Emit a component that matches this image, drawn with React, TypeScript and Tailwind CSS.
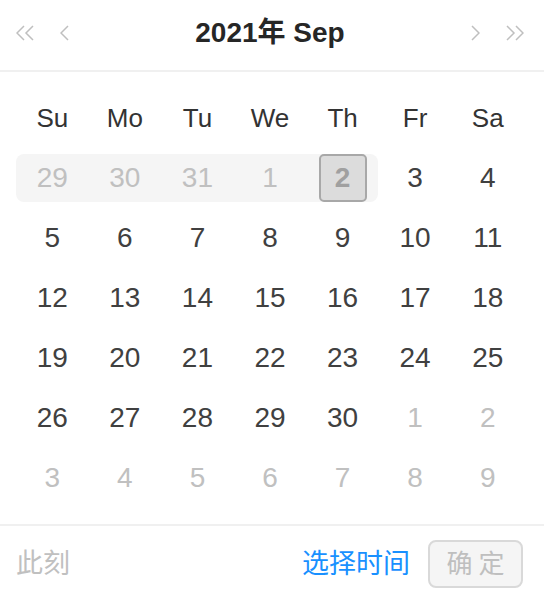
import React from "react";

const font = { fontFamily: '"Liberation Sans", "Noto Sans CJK SC", sans-serif' };

function Chevron({ dir, double }: { dir: "l" | "r"; double?: boolean }) {
  const single = dir === "l" ? "M8 1 L1 8 L8 15" : "M1 1 L8 8 L1 15";
  const second = dir === "l" ? "M17 1 L10 8 L17 15" : "M10 1 L17 8 L10 15";
  return (
    <svg width={double ? 18 : 9} height={16} viewBox={double ? "0 0 18 16" : "0 0 9 16"} fill="none" stroke="#bfbfbf" strokeWidth={1.5}>
      <path d={single} />
      {double && <path d={second} />}
    </svg>
  );
}

export default function App() {
  const weeks = ["Su", "Mo", "Tu", "We", "Th", "Fr", "Sa"];
  const days: { d: number; cur: boolean }[] = [];
  [29, 30, 31].forEach((d) => days.push({ d, cur: false }));
  for (let i = 1; i <= 30; i++) days.push({ d: i, cur: i !== 1 });
  for (let i = 1; i <= 9; i++) days.push({ d: i, cur: false });
  const rows: { d: number; cur: boolean }[][] = [];
  for (let i = 0; i < 6; i++) rows.push(days.slice(i * 7, i * 7 + 7));

  return (
    <div className="w-[544px] h-[602px] bg-white overflow-hidden" style={font}>
      <div className="h-[72px] flex items-center px-4 pb-[4px] border-b-2 border-[#f0f0f0]">
        <div className="flex items-center gap-[26px]">
          <Chevron dir="l" double />
          <Chevron dir="l" />
        </div>
        <div className="flex-1 text-center text-[28px] font-bold text-[#262626]">2021年 Sep</div>
        <div className="flex items-center gap-[26px] pr-[4px]">
          <Chevron dir="r" />
          <Chevron dir="r" double />
        </div>
      </div>
      <div className="pl-4 pt-4 h-[452px]">
        <div className="w-[508px] grid grid-cols-7">
          {weeks.map((w) => (
            <div key={w} className="h-[60px] flex items-center justify-center text-[26px] text-[#333]">
              {w}
            </div>
          ))}
        </div>
        {rows.map((row, ri) => (
          <div key={ri} className="relative w-[508px] grid grid-cols-7">
            {ri === 0 && <div className="absolute left-0 top-[6px] w-[362px] h-[48px] rounded-[8px] bg-[#f5f5f5]" />}
            {row.map((c, ci) => {
              const sel = ri === 0 && ci === 4;
              return (
                <div key={ci} className="relative h-[60px] flex items-center justify-center">
                  {sel ? (
                    <div className="w-[48px] h-[48px] rounded-[5px] border-2 border-[#a8a8a8] bg-[#dcdcdc] flex items-center justify-center text-[28px] font-bold text-[#a0a0a0]">
                      {c.d}
                    </div>
                  ) : (
                    <span className={"text-[28px] " + (c.cur ? "text-[#404040]" : "text-[#c0c0c0]")}>{c.d}</span>
                  )}
                </div>
              );
            })}
          </div>
        ))}
      </div>
      <div className="border-t-2 border-[#f0f0f0] h-[78px] pl-4 pr-[21px] flex items-center">
        <span className="text-[27px] text-[#c0c0c0]">此刻</span>
        <span className="ml-auto text-[27px] text-[#1890ff]">选择时间</span>
        <div className="ml-[18px] w-[95px] h-[48px] rounded-[8px] border-2 border-[#d9d9d9] bg-[#f5f5f5] flex items-center justify-center text-[26px] text-[#bfbfbf] tracking-[6px] pl-[6px]">
          确定
        </div>
      </div>
    </div>
  );
}
